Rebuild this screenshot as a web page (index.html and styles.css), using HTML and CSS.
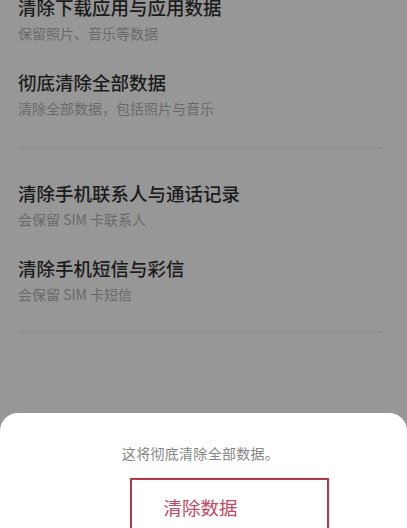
FILE: index.html
```html
<!DOCTYPE html>
<html lang="zh-CN">
<head>
<meta charset="utf-8">
<title>清除数据</title>
<link rel="stylesheet" href="styles.css">
</head>
<body>
<main class="page">
  <section class="group group-first">
    <div class="item">
      <div class="item-title">清除下载应用与应用数据</div>
      <div class="item-sub">保留照片、音乐等数据</div>
    </div>
    <div class="item">
      <div class="item-title">彻底清除全部数据</div>
      <div class="item-sub">清除全部数据，包括照片与音乐</div>
    </div>
  </section>
  <hr class="divider divider-first">
  <section class="group group-second">
    <div class="item">
      <div class="item-title">清除手机联系人与通话记录</div>
      <div class="item-sub">会保留 SIM 卡联系人</div>
    </div>
    <div class="item">
      <div class="item-title">清除手机短信与彩信</div>
      <div class="item-sub">会保留 SIM 卡短信</div>
    </div>
  </section>
  <hr class="divider divider-second">
</main>
<div class="sheet">
  <p class="sheet-msg">这将彻底清除全部数据。</p>
  <button class="sheet-btn" type="button">清除数据</button>
  <div class="mark"></div>
</div>
</body>
</html>
```
FILE: styles.css
```css
html, body {
  margin: 0;
  padding: 0;
  height: 100%;
  overflow: hidden;
}
body {
  background: #979797;
  font-family: "Noto Sans CJK SC", "Noto Sans", sans-serif;
}
.page {
  display: flex;
  flex-direction: column;
  padding: 0 24px 0 18px;
}
.group-first {
  margin-top: -19px;
}
.item {
  display: flex;
  flex-direction: column;
  gap: 4px;
  padding: 13.5px 0;
}
.item-title {
  font-size: 18.5px;
  font-weight: 500;
  line-height: 24px;
  color: #1c1c1c;
  white-space: nowrap;
}
.item-sub {
  font-size: 14px;
  line-height: 20px;
  color: #6a6a6a;
  white-space: nowrap;
}
.divider {
  border: 0;
  height: 1px;
  background: #8b8b8b;
  margin: 0;
}
.divider-first {
  margin-top: 17px;
  margin-bottom: 18px;
}
.divider-second {
  margin-top: 14px;
}
.sheet {
  position: fixed;
  left: 0;
  right: 0;
  bottom: 0;
  height: 115px;
  padding-right: 6px;
  background: #ffffff;
  border-radius: 18px 18px 0 0;
  display: flex;
  flex-direction: column;
  align-items: center;
}
.sheet-msg {
  margin: 30px 0 0 0;
  font-size: 14px;
  line-height: 20px;
  color: #858585;
  letter-spacing: 0.3px;
}
.sheet-btn {
  margin-top: 32px;
  padding: 0;
  border: 0;
  background: transparent;
  font-family: inherit;
  font-size: 18.5px;
  line-height: 24px;
  color: #c04a64;
}
.mark {
  position: absolute;
  left: 130px;
  top: 65px;
  width: 195px;
  height: 80px;
  border: 2.5px solid #ad3c4c;
  box-shadow: 0 0 1px rgba(200, 90, 110, 0.6);
}
```
